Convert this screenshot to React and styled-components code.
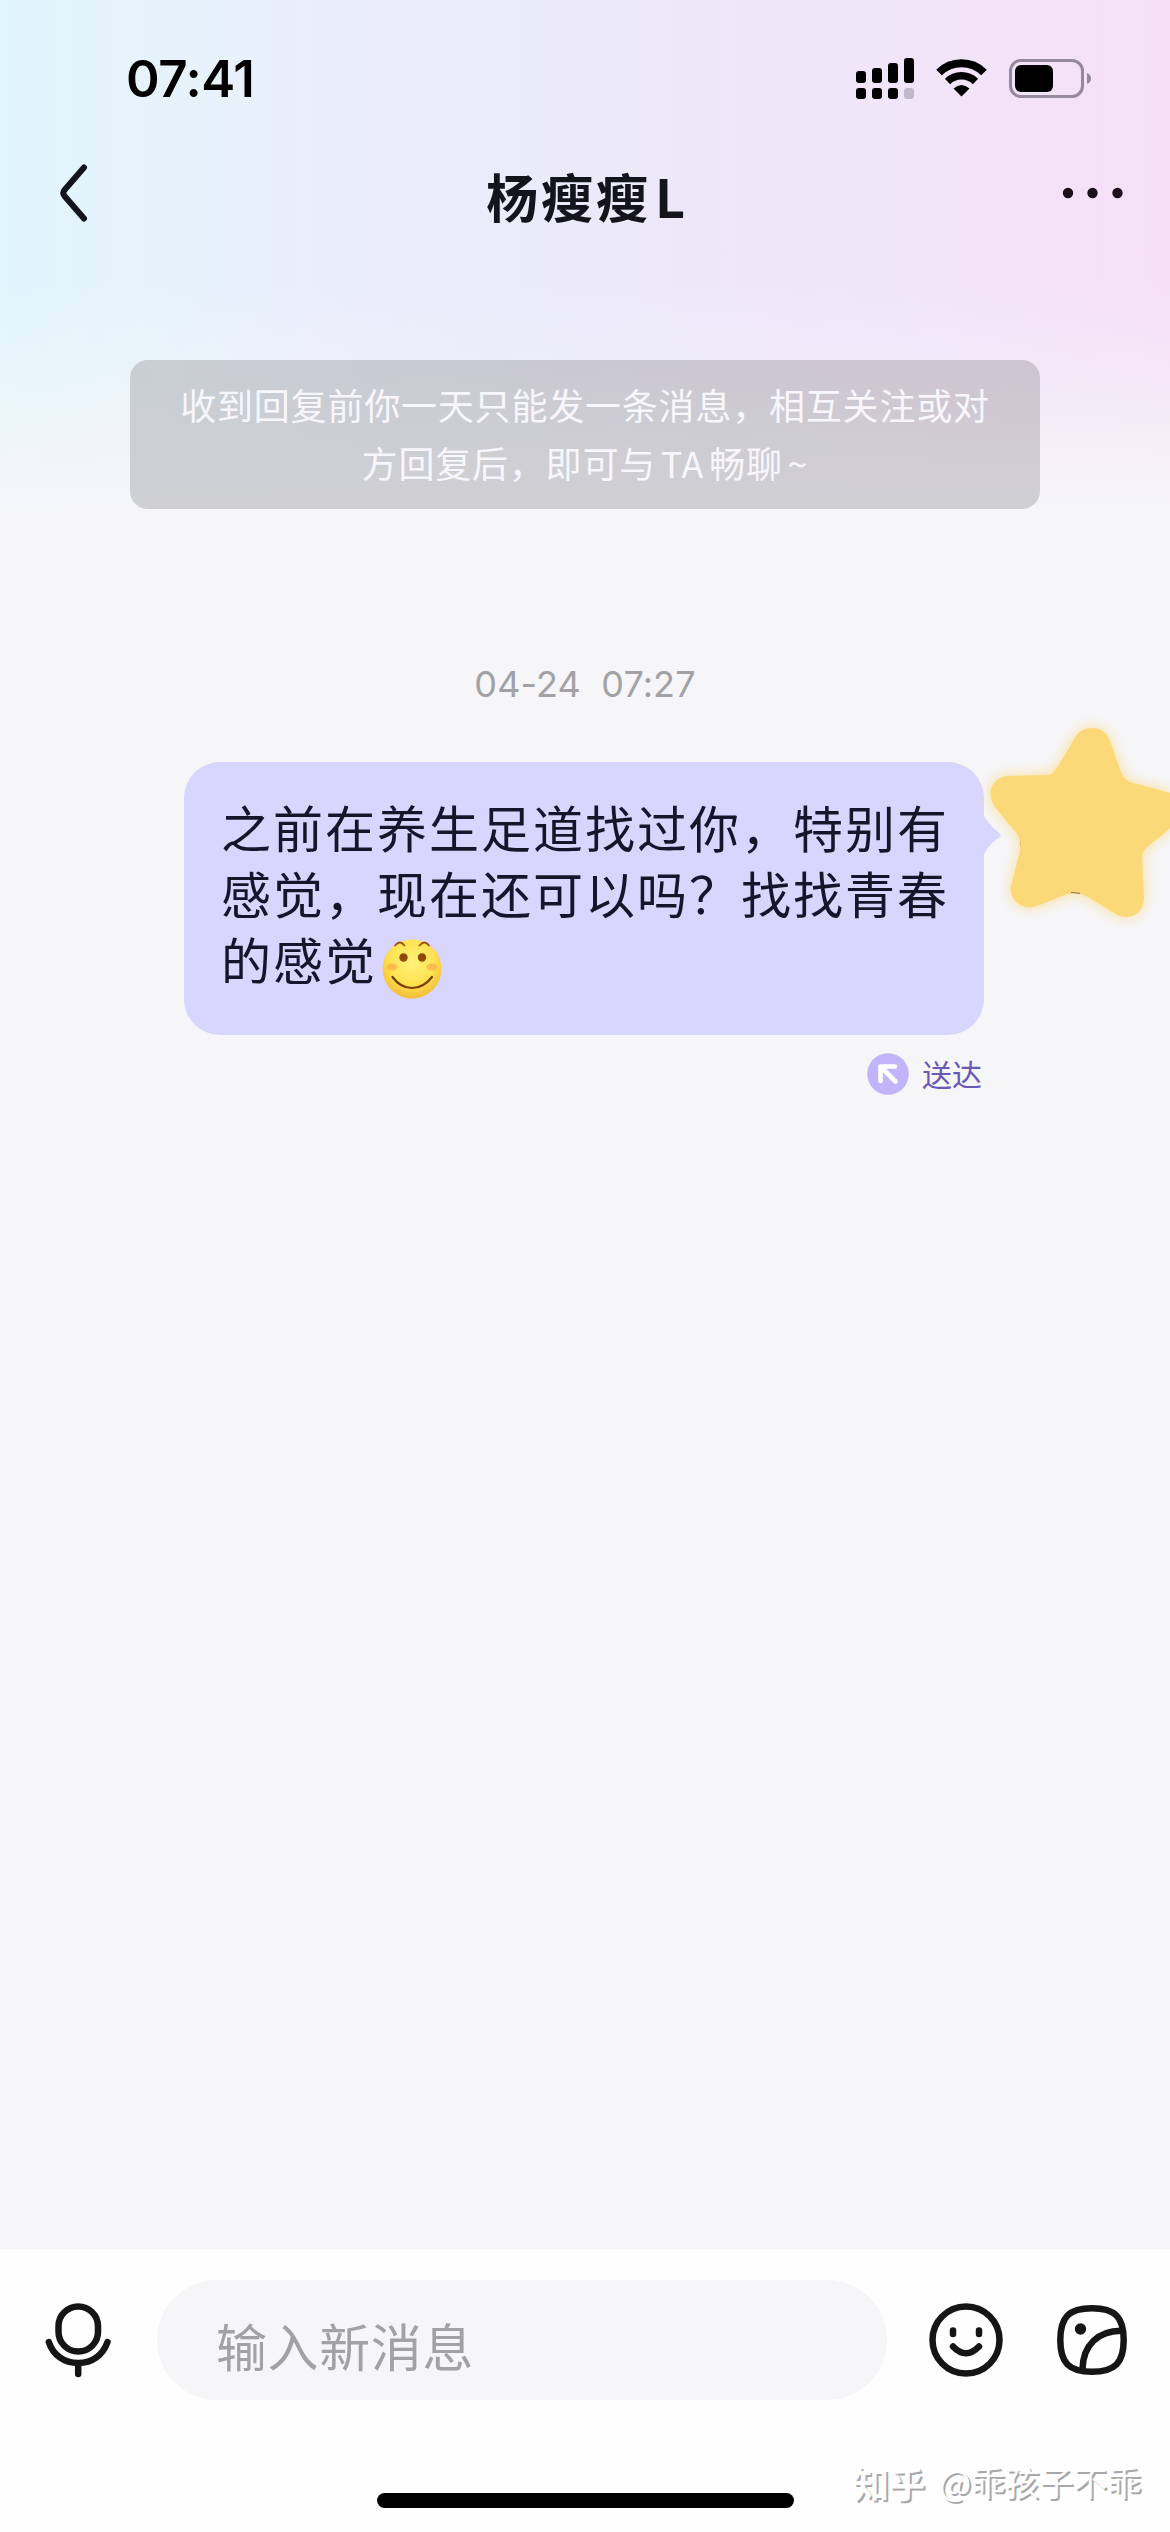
import React, { useState } from 'react';
import styled, { createGlobalStyle } from 'styled-components';

const GlobalStyle = createGlobalStyle`
  * {
    box-sizing: border-box;
  }

  body {
    margin: 0;
    background: #f6f6f9;
    font-family: Inter, 'Noto Sans CJK SC', sans-serif;
  }
`;

const Screen = styled.div`
  display: flex;
  flex-direction: column;
  width: 1170px;
  height: 2532px;
  overflow: hidden;
  background:
    linear-gradient(to bottom, rgba(246, 246, 249, 0) 280px, rgba(246, 246, 249, 0.3) 375px, #f6f6f9 515px),
    linear-gradient(to right, #e1f5fc 0%, #e6f3fb 12%, #e9effc 26%, #ebebfa 42%, #ede8f9 60%, #f2e4f9 80%, #f5e0f7 100%);
`;

const StatusBar = styled.div`
  display: flex;
  align-items: center;
  justify-content: space-between;
  height: 156px;
  padding: 0 78px 0 126px;
`;

const Clock = styled.span`
  font-size: 51px;
  font-weight: 600;
  letter-spacing: -0.4px;
  color: #000;
`;

const StatusIcons = styled.div`
  display: flex;
  align-items: center;
  gap: 22px;
`;

const NavBar = styled.header`
  display: grid;
  grid-template-columns: 200px 1fr 200px;
  align-items: center;
  height: 72px;
  padding: 0 46px 0 56px;
`;

const IconButton = styled.button`
  display: flex;
  justify-content: ${(props) => (props.$end ? 'flex-end' : 'flex-start')};
  padding: 0;
  border: none;
  background: none;
  cursor: pointer;
`;

const Title = styled.h1`
  margin: 0 6px 0 0;
  padding-top: 7px;
  text-align: center;
  font-family: 'Noto Sans CJK SC', sans-serif;
  font-size: 52px;
  font-weight: 700;
  line-height: 66px;
  letter-spacing: 3px;
  color: #14151c;

  span {
    margin-left: 4px;
  }
`;

const Chat = styled.main`
  display: flex;
  flex: 1;
  flex-direction: column;
  align-items: center;
  padding-top: 132px;
`;

const Notice = styled.div`
  width: 910px;
  height: 149px;
  padding: 15px 0;
  border-radius: 18px;
  background: rgba(60, 60, 60, 0.2);
  text-align: center;
  font-family: 'Noto Sans CJK SC', sans-serif;
  font-size: 36px;
  line-height: 58px;
  letter-spacing: 0.8px;
  word-spacing: -4px;
  color: #f8f6fd;
`;

const DateLabel = styled.div`
  margin-top: 153px;
  font-size: 36px;
  line-height: 44px;
  letter-spacing: 0.1px;
  color: #a2a2a5;
  white-space: pre;
`;

const MessageRow = styled.div`
  display: flex;
  align-self: stretch;
  justify-content: flex-end;
  margin-top: 56px;
`;

const MessageColumn = styled.div`
  display: flex;
  flex-direction: column;
  align-items: flex-end;
  width: 800px;
`;

const Bubble = styled.div`
  position: relative;
  width: 800px;
  height: 273px;
  padding: 31px 34px 0 37px;
  border-radius: 36px;
  background: #d8d6fe;
  font-family: 'Noto Sans CJK SC', sans-serif;
  font-size: 50px;
  line-height: 66px;
  letter-spacing: 2px;
  color: #16162b;
  white-space: nowrap;
`;

const Tail = styled.svg`
  position: absolute;
  left: 799px;
  top: 52px;
`;

const Emoji = styled.svg`
  margin: -4px 0 0 5px;
  vertical-align: -19px;
`;

const Avatar = styled.div`
  width: 210px;
  height: 240px;
  margin: -62px 0 0 -24px;
  overflow: hidden;
  z-index: 1;

  svg {
    display: block;
    filter: drop-shadow(0 0 7px rgba(255, 214, 110, 0.75));
  }
`;

const Delivered = styled.div`
  display: flex;
  align-items: center;
  gap: 13px;
  margin: 18px 2px 0 0;
  font-family: 'Noto Sans CJK SC', sans-serif;
  font-size: 30px;
  line-height: 42px;
  color: #6a58b4;

  span {
    margin-top: -3px;
  }
`;

const Composer = styled.footer`
  display: flex;
  flex-direction: column;
  height: 283px;
  background: #fefefe;
`;

const ComposerRow = styled.div`
  display: flex;
  align-items: center;
  padding: 31px 42px 0 44px;
`;

const MessageInput = styled.input`
  width: 730px;
  height: 120px;
  margin: 0 42px 0 45px;
  padding: 10px 60px 0 59px;
  border: none;
  border-radius: 60px;
  outline: none;
  background: #f6f6f9;
  font-family: 'Noto Sans CJK SC', sans-serif;
  font-size: 51px;
  letter-spacing: 0.6px;
  color: #16162b;

  &::placeholder {
    color: #a2a2a5;
    opacity: 1;
  }
`;

const ActionIcons = styled.div`
  display: flex;
  align-items: center;
  gap: 54px;
`;

const BottomRow = styled.div`
  display: grid;
  grid-template-columns: 377px 417px 1fr;
  align-items: end;
  height: 108px;
`;

const HomeIndicator = styled.div`
  grid-column: 2;
  height: 15px;
  border-radius: 8px;
  background: #000;
`;

const Watermark = styled.div`
  display: flex;
  align-items: center;
  gap: 14px;
  margin: 0 0 4px 59px;
  font-family: 'Noto Sans CJK SC', sans-serif;
  font-size: 34px;
  line-height: 44px;
  color: #fff;
  text-shadow: 2px 2px 0 #a8a8a8;
  white-space: nowrap;

  b {
    font-size: 36px;
    font-weight: 700;
  }
`;

const signalBars = [
  { x: 0, y: 13 },
  { x: 16, y: 10 },
  { x: 32, y: 5 },
  { x: 48, y: 0 },
];

const SignalIcon = () => (
  <svg width="58" height="41" viewBox="0 0 58 41">
    {signalBars.map((bar) => (
      <rect key={bar.x} x={bar.x} y={bar.y} width="10" height={25 - bar.y} rx="3" />
    ))}
    {signalBars.map((bar, i) => (
      <rect key={bar.x} x={bar.x} y="30" width="10" height="11" rx="3" fill={i === 3 ? '#c3b9cb' : '#000'} />
    ))}
  </svg>
);

const WifiIcon = () => (
  <svg width="51" height="38" viewBox="0 0 51 38" fill="none" stroke="#000">
    <path d="M3 13.5a32 32 0 0 1 45 0" strokeWidth="8" />
    <path d="M11.5 22.5a20 20 0 0 1 28 0" strokeWidth="7.5" />
    <path d="M17.5 29.5q8-7 16 0L25.5 37.5z" fill="#000" stroke="none" />
  </svg>
);

const BatteryIcon = () => (
  <svg width="83" height="39" viewBox="0 0 83 39">
    <rect x="1.5" y="1.5" width="72" height="36" rx="10.5" fill="none" stroke="#958a9d" strokeWidth="3" />
    <rect x="6" y="6" width="38" height="27" rx="6" />
    <path d="M78 14q4 1.5 4 5.5t-4 5.5z" fill="#958a9d" />
  </svg>
);

const BackIcon = () => (
  <svg width="34" height="62" viewBox="0 0 34 62" fill="none">
    <path d="M28 5.5L8.5 28q-2.5 3 0 6L28 56.5" stroke="#14151c" strokeWidth="6" strokeLinecap="round" />
  </svg>
);

const MoreIcon = () => (
  <svg width="62" height="12" viewBox="0 0 62 12" fill="#1c0f1c">
    <circle cx="6" cy="6" r="5.2" />
    <circle cx="30.5" cy="6" r="5.2" />
    <circle cx="55.5" cy="6" r="5.2" />
  </svg>
);

const SmirkEmoji = () => (
  <Emoji width="60" height="60" viewBox="0 0 60 60" fill="none">
    <defs>
      <radialGradient id="face" cx="50%" cy="38%" r="62%">
        <stop offset="0" stopColor="#fff27d" />
        <stop offset="0.6" stopColor="#ffe352" />
        <stop offset="1" stopColor="#f3bd36" />
      </radialGradient>
    </defs>
    <circle cx="30" cy="30" r="29.5" fill="url(#face)" />
    <ellipse cx="10" cy="28" rx="5.5" ry="3.5" fill="#f9a94c" opacity="0.7" />
    <ellipse cx="50" cy="28" rx="5.5" ry="3.5" fill="#f9a94c" opacity="0.7" />
    <circle cx="21.5" cy="18.5" r="4.2" fill="#8c4a08" />
    <circle cx="40" cy="18.5" r="4.2" fill="#8c4a08" />
    <path d="M13 6.5q5-6 9.5 0M37.5 6.5q5-6 9.5 0" stroke="#a3551c" strokeWidth="1.8" strokeLinecap="round" />
    <path d="M10.5 38q8 11 19.5 11t20-11" stroke="#7c3c08" strokeWidth="2.2" strokeLinecap="round" />
  </Emoji>
);

const StarAvatar = () => (
  <svg width="210" height="240" viewBox="0 0 210 240">
    <path
      d="M116 36Q121 28 132 28Q145 28 150 41L161 72Q164 81 173 83L211 93Q222 98 222 108Q222 118 212 127L187 147Q182 151 182 159L184 198Q183 216 166 217Q160 217 154 213L128 197Q118 191 107 194L77 206Q67 209 60 205Q49 198 51 186L60 151Q61 141 58 135L35 107Q28 97 32 86Q37 77 47 76L88 75Q93 74 97 68Z"
      fill="#fcd978"
    />
    <path d="M111 192.4l9 1" stroke="#6f6432" strokeWidth="0.9" />
    <path d="M60.3 141v5" stroke="#b39c54" strokeWidth="0.5" />
  </svg>
);

const DeliveredIcon = () => (
  <svg width="42" height="42" viewBox="0 0 42 42" fill="none">
    <circle cx="21" cy="21" r="20.8" fill="#c1b4f8" />
    <path d="M28 13.5H13.5V28M14.5 14.5L28.5 28.5" stroke="#fff" strokeWidth="4.6" strokeLinecap="round" strokeLinejoin="round" />
  </svg>
);

const MicIcon = () => (
  <svg width="68" height="76" viewBox="0 0 68 76" fill="none" stroke="#151515" strokeWidth="6.5" strokeLinecap="round">
    <rect x="14.5" y="4.5" width="39.5" height="45" rx="19.75" />
    <path d="M4.8 40C9 53 20 61 34.2 61S59 53 63.5 40M34.2 62v10" />
  </svg>
);

const SmileIcon = () => (
  <svg width="74" height="74" viewBox="0 0 74 74" fill="none" stroke="#151515" strokeWidth="6.5" strokeLinecap="round">
    <circle cx="37" cy="37" r="33.5" />
    <path d="M24 27.5v3.5M50 27.5v3.5M24 43.5q13 13.5 26 0" />
  </svg>
);

const GalleryIcon = () => (
  <svg width="70" height="70" viewBox="0 0 70 70" fill="none" stroke="#151515" strokeWidth="6.5">
    <path d="M35 3.3C58 3.3 66.7 12 66.7 35S58 66.7 35 66.7 3.3 58 3.3 35 12 3.3 35 3.3z" />
    <path d="M64 25.8C41 26 26 40 25.5 64" />
    <circle cx="23.5" cy="24" r="5.7" fill="#151515" stroke="none" />
  </svg>
);

const App = () => {
  const [message, setMessage] = useState('');

  return (
    <Screen>
      <GlobalStyle />
      <StatusBar>
        <Clock>07:41</Clock>
        <StatusIcons>
          <SignalIcon />
          <WifiIcon />
          <BatteryIcon />
        </StatusIcons>
      </StatusBar>
      <NavBar>
        <IconButton type="button">
          <BackIcon />
        </IconButton>
        <Title>
          杨瘦瘦<span>L</span>
        </Title>
        <IconButton type="button" $end>
          <MoreIcon />
        </IconButton>
      </NavBar>
      <Chat>
        <Notice>
          收到回复前你一天只能发一条消息，相互关注或对
          <br />
          方回复后，即可与 TA 畅聊 ~
        </Notice>
        <DateLabel>04-24  07:27</DateLabel>
        <MessageRow>
          <MessageColumn>
            <Bubble>
              之前在养生足道找过你，特别有
              <br />
              感觉，现在还可以吗？找找青春
              <br />
              的感觉
              <SmirkEmoji />
              <Tail width="19" height="44" viewBox="0 0 19 44">
                <path d="M0 0Q4 9 15 18Q21 22 14 25Q4 32 0 43z" fill="#d8d6fe" />
              </Tail>
            </Bubble>
            <Delivered>
              <DeliveredIcon />
              <span>送达</span>
            </Delivered>
          </MessageColumn>
          <Avatar>
            <StarAvatar />
          </Avatar>
        </MessageRow>
      </Chat>
      <Composer>
        <ComposerRow>
          <MicIcon />
          <MessageInput
            type="text"
            placeholder="输入新消息"
            value={message}
            onChange={(e) => setMessage(e.target.value)}
          />
          <ActionIcons>
            <SmileIcon />
            <GalleryIcon />
          </ActionIcons>
        </ComposerRow>
        <BottomRow>
          <HomeIndicator />
          <Watermark>
            <b>知乎</b>
            <span>@乖孩子不乖</span>
          </Watermark>
        </BottomRow>
      </Composer>
    </Screen>
  );
};

export default App;
